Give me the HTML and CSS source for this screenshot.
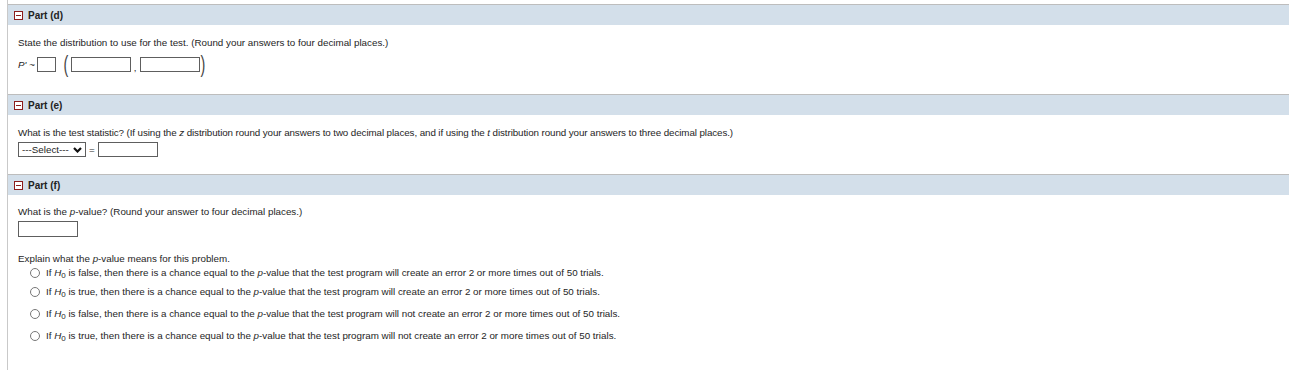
FILE: index.html
```html
<!DOCTYPE html>
<html lang="en">
<head>
  <meta charset="UTF-8">
  <title>Hypothesis Test - Parts (d) to (f)</title>
  <link rel="stylesheet" href="styles.css">
</head>
<body>
  <div class="page">

    <div class="part part-d">
      <div class="part-head"><span class="toggle"></span>Part (d)</div>
      <div class="part-body">
        <p class="q">State the distribution to use for the test. (Round your answers to four decimal places.)</p>
        <div class="dist">
          <span class="var"><i>P'</i> ~</span>
          <input type="text" class="box box-sm">
          <span class="paren">(</span>
          <input type="text" class="box box-md">
          <span class="comma">,</span>
          <input type="text" class="box box-md">
          <span class="paren">)</span>
        </div>
      </div>
    </div>

    <div class="part part-e">
      <div class="part-head"><span class="toggle"></span>Part (e)</div>
      <div class="part-body">
        <p class="q tight">What is the test statistic? (If using the <i>z</i> distribution round your answers to two decimal places, and if using the <i>t</i> distribution round your answers to three decimal places.)</p>
        <div class="stat">
          <div class="select">---Select---
            <svg class="chev" width="9" height="6" viewBox="0 0 9 6"><path d="M1 1l3.5 3.5L8 1" fill="none" stroke="#111" stroke-width="2.2"/></svg>
          </div>
          <span class="eq">=</span>
          <input type="text" class="box box-md">
        </div>
      </div>
    </div>

    <div class="part part-f">
      <div class="part-head"><span class="toggle"></span>Part (f)</div>
      <div class="part-body">
        <p class="q">What is the <i>p</i>-value? (Round your answer to four decimal places.)</p>
        <input type="text" class="box box-md pval">

        <p class="q explain">Explain what the <i>p</i>-value means for this problem.</p>
        <ul class="choices">
          <li><span class="radio"></span><span>If <i>H</i><sub>0</sub> is false, then there is a chance equal to the <i>p</i>-value that the test program will create an error 2 or more times out of 50 trials.</span></li>
          <li><span class="radio"></span><span>If <i>H</i><sub>0</sub> is true, then there is a chance equal to the <i>p</i>-value that the test program will create an error 2 or more times out of 50 trials.</span></li>
          <li><span class="radio"></span><span>If <i>H</i><sub>0</sub> is false, then there is a chance equal to the <i>p</i>-value that the test program will not create an error 2 or more times out of 50 trials.</span></li>
          <li><span class="radio"></span><span>If <i>H</i><sub>0</sub> is true, then there is a chance equal to the <i>p</i>-value that the test program will not create an error 2 or more times out of 50 trials.</span></li>
        </ul>
      </div>
    </div>

  </div>
</body>
</html>
```

FILE: styles.css
```css
body {
  margin: 0;
  padding: 0;
  background: #fff;
  font-family: "Liberation Sans", Arial, sans-serif;
  font-size: 9.8px;
  color: #1e1e1e;
}
.page {
  margin-left: 7px;
  border-left: 1px solid #c9c9c9;
  padding-top: 4px;
  min-height: 366px;
}
.part-head {
  height: 20px;
  border-top: 1px solid #bdbdbd;
  background: #d3dfea;
  display: flex;
  align-items: center;
  padding-left: 6px;
  font-weight: bold;
  font-size: 10px;
  color: #222;
}
.toggle {
  width: 7px;
  height: 7px;
  border: 1px solid #8c1c1c;
  background: #fff;
  margin-right: 5px;
  position: relative;
}
.toggle::after {
  content: "";
  position: absolute;
  left: 1px;
  right: 1px;
  top: 3px;
  height: 1px;
  background: #8c1c1c;
}
.part-body {
  padding-left: 10px;
}
.q {
  margin: 0;
  line-height: 12px;
}
.q.tight {
  letter-spacing: -0.09px;
}
.part-d .part-body {
  padding-top: 12px;
  height: 57px;
}
.part-e .part-body {
  padding-top: 12px;
  height: 47px;
}
.part-f .part-body {
  padding-top: 11px;
}
.box {
  box-sizing: border-box;
  height: 15px;
  border: 1px solid #5e5e5e;
  background: #fff;
  margin: 0;
  padding: 0;
}
.box-sm { width: 19px; }
.box-md { width: 60px; }
.dist {
  display: flex;
  align-items: center;
  margin-top: 6px;
  height: 18px;
}
.var {
  margin-right: 2px;
}
.paren {
  font-size: 24px;
  font-weight: 100;
  line-height: 18px;
  margin: 0 1px 0 6px;
  transform: scaleX(0.6);
  color: #444;
}
.dist .paren:last-child {
  margin: 0 0 0 -1px;
}
.comma {
  margin: 0 3px 0 3px;
  align-self: flex-end;
}
.stat {
  display: flex;
  align-items: center;
  margin-top: 3px;
}
.select {
  box-sizing: border-box;
  height: 15px;
  width: 68px;
  border: 1px solid #5e5e5e;
  display: flex;
  align-items: center;
  padding-left: 3px;
  gap: 4px;
}
.chev {
  display: block;
}
.eq {
  margin: 0 3px 0 3px;
}
.pval {
  display: block;
  margin-top: 3px;
  height: 16px;
}
.explain {
  margin-top: 16px;
}
.choices {
  list-style: none;
  margin: 0;
  padding: 0 0 0 12px;
}
.choices li {
  display: flex;
  align-items: center;
  height: 22px;
  line-height: 12px;
}
.choices li:first-child {
  height: 16px;
}
.radio {
  width: 8px;
  height: 8px;
  border: 1px solid #777;
  border-radius: 50%;
  margin-right: 6px;
  background: #fff;
  flex: none;
}
sub {
  font-size: 8px;
  vertical-align: -2px;
  line-height: 0;
}
```
